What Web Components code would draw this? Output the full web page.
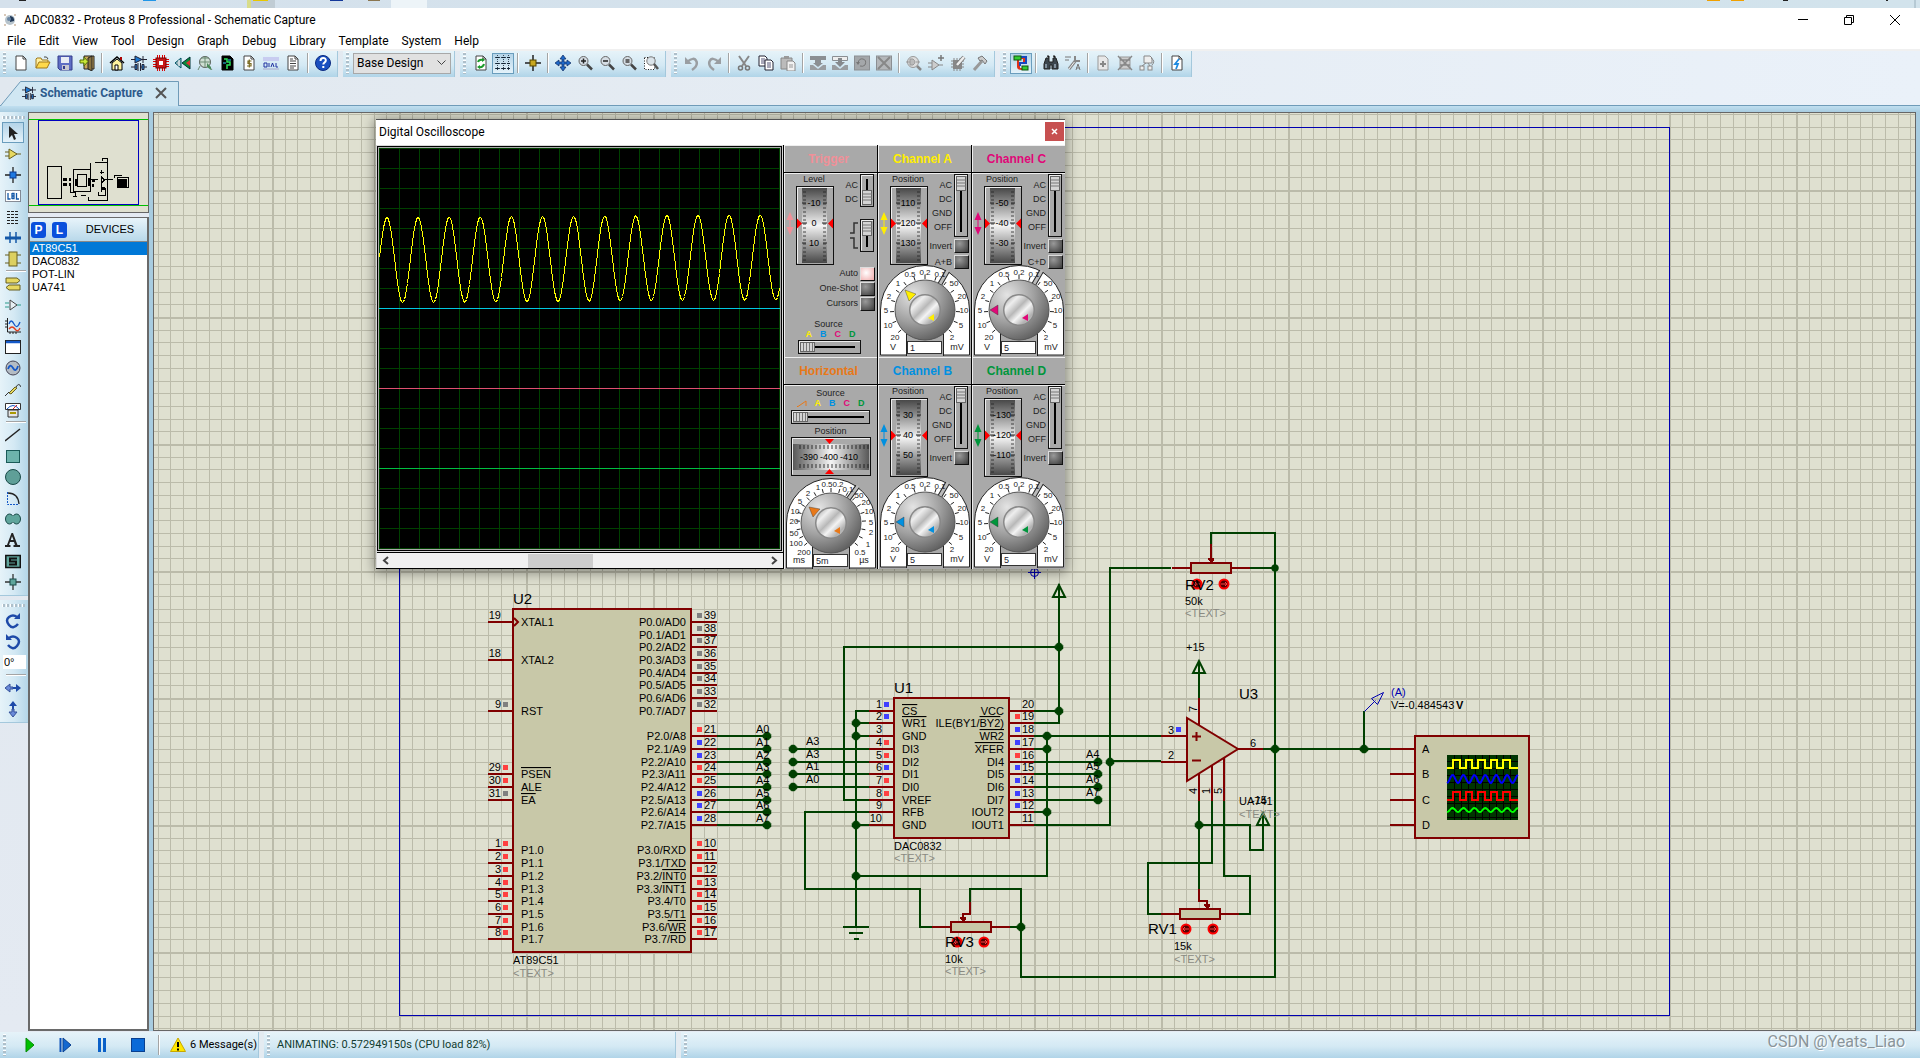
<!DOCTYPE html>
<html lang="en">
<head>
<meta charset="utf-8">
<title>ADC0832 - Proteus 8 Professional - Schematic Capture</title>
<style>
html,body{height:100%;margin:0}
body{font:12px/16px Roboto,"Liberation Sans",sans-serif;color:#000;overflow:hidden}
</style>
</head>
<body>
<proteus-app></proteus-app>
<script>
/* ---------- icons, all on a 16 x 16 field ---------- */
const mag = inner => `<circle cx="6.500" cy="6" r="4.500" fill="#d5dde4" stroke="#666"/><path d="M10 9.500l5 5" stroke="#444" stroke-width="2.500"/>${inner}`;
const page = inner => `<path d="M3 1h7l3 3v11H3z" fill="#fff" stroke="#444"/><path d="M10 1v3h3" fill="none" stroke="#444"/>${inner}`;
const gpage = inner => `<path d="M3 1h7l3 3v11H3z" fill="#e8e8e8" stroke="#999"/>${inner}`;
const ICONS = {
 new: page(''),
 open: `<path d="M1 13V4l1-1h4l1 2h6v3" fill="#fff0a0" stroke="#a07818"/><path d="M1 13l3-6h11l-3 6z" fill="#ffd94a" stroke="#a07818"/><path d="M9 2q3-1 4 2" fill="none" stroke="#444"/>`,
 save: `<path d="M1 1h14v14H3l-2-2z" fill="#5f6ec4" stroke="#343c8c"/><path d="M4 2h8v6H4z" fill="#e8ecf4"/><path d="M5 10h7v5H5z" fill="#c8c8d0"/><path d="M6 11h2v3H6z" fill="#343c8c"/>`,
 exit: `<path d="M5 1h10v13H5z" fill="#caa85c" stroke="#222"/><path d="M9 3l4-2v15l-4-2z" fill="#8a7440" stroke="#222"/><path d="M1 5h4V2l4 4.500L5 11V8H1z" fill="#c8e838" stroke="#55700a"/>`,
 home: `<path d="M1 8l7-6 7 6" fill="none" stroke="#000" stroke-width="1.500"/><path d="M3 8l5-4 5 4v7H3z" fill="#fff3a0" stroke="#000"/><path d="M6 10h3v5H6z" fill="#fff" stroke="#000"/><path d="M12 2v3" stroke="#a00" stroke-width="2"/>`,
 sch: `<path d="M0 4.500h16M12 1v7M0 12h6M10 12h6M7 8v8M9.500 8v8" stroke="#223" fill="none"/><path d="M4 1l7 3.500L4 8z" fill="#1e78d0" stroke="#223"/><path d="M4 9.500h2v5H4zM11 9.500h2v5h-2z" fill="#1e78d0" stroke="#223"/>`,
 pcb: `<path d="M4.500 0v16M6.500 0v16M9.500 0v16M11.500 0v16M0 4.500h16M0 6.500h16M0 9.500h16M0 11.500h16" stroke="#d00"/><rect x="3" y="3" width="10" height="10" fill="#c81818" stroke="#700"/><rect x="6" y="6" width="4" height="4" fill="#fff"/>`,
 view3d: `<path d="M0 8l6-5v10z" fill="#9ab4bc" stroke="#056"/><path d="M4 5v6" stroke="#fff"/><path d="M7 8l8-6v12z" fill="#0a8a3a" stroke="#033"/><path d="M11 8l4-3v6z" fill="#d33"/>`,
 gerber: `<circle cx="8" cy="7" r="5.500" fill="#cfe0d4" stroke="#555"/><path d="M2 7h12M8 1v12M4 3h8M3 11l-2 4M12 11l3 4" stroke="#6a8a72"/><path d="M10 8l4 4v3l-4-3z" fill="#4a8a5a"/>`,
 design: `<path d="M3 1h8l3 3v11H3z" fill="#000" stroke="#000"/><path d="M5 4h3v3h3v3H8v4" stroke="#2be05a" fill="none" stroke-width="1.500"/><path d="M4 8h3M9 5h3" stroke="#3cf"/>`,
 bom: page(`<path d="M10.500 6H7v2.500h3V11H6M8.300 4.500v8" fill="none" stroke="#7a6a20" stroke-width="1.200"/>`),
 vsm: `<path d="M0 2h16v4H0z" fill="#c8ccf0"/><path d="M1 8v4h3V8zM6 8v4M8 12l1.500-4 1.500 4M13 8v4h2" fill="none" stroke="#2030a0"/><path d="M0 14h16" stroke="#aac"/>`,
 notes: page(`<path d="M5 6h6M5 8.500h6M5 11h6M5 13h4M5 4h3" stroke="#444"/>`),
 help: `<circle cx="8" cy="8" r="7.500" fill="#1a4fc0" stroke="#0b2a80"/><path d="M5.500 6q0-3 2.700-3t2.600 2.500c0 2-2.500 2-2.500 4" fill="none" stroke="#fff" stroke-width="2"/><rect x="7.300" y="11" width="2" height="2" fill="#fff"/>`,
 refresh: page(`<path d="M5 7q1-3 5-2M11 9q-1 4-5 3" fill="none" stroke="#1a9a2a" stroke-width="2"/><path d="M9 3l3 2-3 2zM7 10l-3 2 3 2z" fill="#1a9a2a"/>`),
 grid: `<path d="M2.500 0v16M8.500 0v16M13.500 0v16M0 2.500h16M0 8.500h16M0 13.500h16" stroke="#345" stroke-dasharray="1 1"/><path d="M1 2.500h3M7 2.500h3M12 2.500h3M1 8.500h3M7 8.500h3M12 8.500h3M1 13.500h3M7 13.500h3M12 13.500h3" stroke="#123"/>`,
 origin: `<path d="M8 0v16M0 8h16" stroke="#222" stroke-width="1.500"/><rect x="5" y="5" width="6" height="6" fill="#c8a820" stroke="#554400"/>`,
 pan: `<path d="M8 0l3 4H9v3h3V5l4 3-4 3V9H9v3h2l-3 4-3-4h2V9H4v2L0 8l4-3v2h3V4H5z" fill="#1e68c8" stroke="#0b2a60" stroke-width=".7"/>`,
 zin: mag('<path d="M4 6h5M6.500 3.500v5" stroke="#222" stroke-width="1.500"/>'),
 zout: mag('<path d="M4 6h5" stroke="#222" stroke-width="1.500"/>'),
 zall: mag('<rect x="4.500" y="4" width="4" height="4" fill="#666"/>'),
 zarea: `<path d="M1.500 2.500h10v12h-10z" fill="#fff" stroke="#222" stroke-dasharray="1 1.500"/><circle cx="8" cy="6" r="4.200" fill="#dbe4ea" stroke="#777"/><path d="M11 9l4 5" stroke="#555" stroke-width="2.500"/>`,
 undo: `<path d="M3 7q7-6 9.500-.5Q14 11 8 15" fill="none" stroke="#9a9ea2" stroke-width="2.500"/><path d="M1 2v7h7z" fill="#9a9ea2"/>`,
 redo: `<path d="M13 7Q6 1 3.500 6.500 2 11 8 15" fill="none" stroke="#9a9ea2" stroke-width="2.500"/><path d="M15 2v7H8z" fill="#9a9ea2"/>`,
 cut: `<path d="M3 1l7 10M13 1L6 11" stroke="#888" stroke-width="2"/><circle cx="4.500" cy="13" r="2" fill="none" stroke="#777" stroke-width="1.500"/><circle cx="11.500" cy="13" r="2" fill="none" stroke="#777" stroke-width="1.500"/>`,
 copy: `<path d="M1 1h6l2 2v8H1z" fill="#fff" stroke="#223"/><path d="M3 4h4M3 6h4M3 8h4" stroke="#557"/><path d="M7 5h6l2 2v8H7z" fill="#fff" stroke="#223"/><path d="M9 8h4M9 10h4M9 12h4" stroke="#557"/>`,
 paste: `<path d="M1 3h11v11H1z" fill="#bbb" stroke="#888"/><rect x="4" y="1" width="5" height="3" fill="#999"/><path d="M7 6h6l2 2v8H7z" fill="#f2f2f2" stroke="#888"/><path d="M9 10h4M9 12h4" stroke="#999"/>`,
 bcopy: `<path d="M0 1h16v4h-5v3h2l-5 4-5-4h2V5H0z" fill="#8b8f93"/><path d="M0 10h3l5 4 5-4h3v5H0z" fill="#999da1"/>`,
 bmove: `<path d="M.5 1.500h15v4H.5z" fill="#eee" stroke="#8b8f93"/><path d="M6 3h4v4h3l-5 5-5-5h3z" fill="#85898d"/><path d="M0 10h3l5 4 5-4h3v5H0z" fill="#999da1"/>`,
 brot: `<rect x=".5" y="1" width="15" height="14" fill="#a4a7aa" stroke="#8b8f93"/><path d="M4 8q1-5 5-4t2 6q-2 2-5 1" fill="none" stroke="#777"/><path d="M2 7h4l-2 3z" fill="#777"/>`,
 bdel: `<rect x=".5" y="1" width="15" height="14" fill="#b4b7ba" stroke="#8b8f93"/><path d="M2 2l12 12M14 2L2 14" stroke="#888" stroke-width="2"/>`,
 pick: `<circle cx="7" cy="7" r="5.500" fill="#ddd" stroke="#999"/><path d="M4 4h3q4 3 0 6H4zM0 7h4M10 7h4" fill="#bbb" stroke="#999"/><path d="M11 11l4 4" stroke="#888" stroke-width="2.500"/>`,
 make: `<path d="M4 5l7 5-7 5zM0 8h4M0 12h4M11 10h4" fill="#ccc" stroke="#888"/><path d="M13 0v6M10 3h6" stroke="#777" stroke-width="1.500"/>`,
 pack: `<path d="M4 3v13M7 3v13M10 3v13M1 6h13M1 9h13M1 12h13" stroke="#888"/><rect x="3" y="5" width="9" height="9" fill="#888"/><path d="M7 10l7-8" stroke="#777" stroke-width="4"/><path d="M7 10l7-8" stroke="#eee" stroke-width="2.500"/>`,
 decomp: `<path d="M2 15l8-9" stroke="#999" stroke-width="3"/><path d="M6 3l4-2 5 5-2 3-3-4-2 1z" fill="#ccc" stroke="#777"/>`,
 wire: `<path d="M5 4v8q0 2 4 2M8 3h3v5H6v5" fill="none" stroke="#e0301a" stroke-width="2"/><path d="M8 2h5v6H7v3" fill="none" stroke="#1848c0" stroke-width="2"/><rect x="1" y="1" width="7" height="4" fill="#3c3" stroke="#151"/><rect x="9" y="11" width="6" height="4" fill="#3c3" stroke="#151"/>`,
 find: `<path d="M3 3h3v4h4V3h3l2 6v5H9v-4H7v4H1V9z" fill="#3c464e" stroke="#222"/><path d="M3 9v4M12 9v4" stroke="#9ab" stroke-width="1.500"/><path d="M4 1h2v2M10 1h2v2" stroke="#222"/>`,
 prop: `<path d="M0 2h6M0 5h4" stroke="#777"/><path d="M4 14l7-9" stroke="#888" stroke-width="3"/><path d="M4 14l7-9" stroke="#eee"/><path d="M10 1v5h5" fill="none" stroke="#888" stroke-width="2"/><path d="M11 15l2-6 2 6M11 13h4" fill="none" stroke="#777"/>`,
 addp: gpage('<path d="M8 6v6M5 9h6" stroke="#888" stroke-width="2"/>'),
 delp: `<path d="M3 2h10v12H3z" fill="#ccc" stroke="#999"/><path d="M1 1l14 14M15 1L1 15M3 5h10M3 10h10" stroke="#888" stroke-width="1.500"/>`,
 parent: `<path d="M5 1h6l2 2v5H5z" fill="#eee" stroke="#888"/><rect x="1" y="11" width="4" height="4" fill="#eee" stroke="#888"/><rect x="9" y="11" width="4" height="4" fill="#eee" stroke="#888"/><path d="M7 8l-4 3M9 8l2 3M12 3q5 3 1 7" fill="none" stroke="#888"/>`,
 erc: page(`<path d="M10 4L6 9h3l-2 5" fill="none" stroke="#1e8ae0" stroke-width="1.800"/>`),
 select: `<path d="M4 1v12l3-3 2 5 2-1-2-5h4z" fill="#222"/>`,
 comp: `<path d="M0 6h5M0 10h5M11 8h5" stroke="#665f20"/><path d="M4 3l8 5-8 5z" fill="#e6d860" stroke="#665f20"/>`,
 junction: `<path d="M8 0v16M0 8h16" stroke="#222" stroke-width="1.300"/><rect x="5" y="5" width="6" height="6" fill="#1e78e0" stroke="#0b3a90"/>`,
 label: `<rect x=".5" y="2.500" width="15" height="11" fill="#fff" stroke="#223" stroke-dasharray="1 1"/><path d="M3 5v6h2.500M7 5v6M7 5.500h2v5H7M7 8h2M11.500 5v6H14" fill="none" stroke="#1458a8" stroke-width="1.300"/>`,
 script: `<path d="M2 2.500h12M2 5.500h12M2 8.500h12M2 11.500h12M2 14.500h12" stroke="#222" stroke-dasharray="3 1"/>`,
 bus: `<path d="M0 8h16" stroke="#1458a8" stroke-width="3"/><path d="M5 2v11M11 2v11" stroke="#1458a8" stroke-width="1.500"/>`,
 sub: `<path d="M0 4h16M0 12h16" stroke="#665f20"/><rect x="4" y="1" width="8" height="14" fill="#dcd060" stroke="#665f20"/>`,
 term: `<path d="M1 2h11l3 2.500L12 7H1zM4 9h11v5H4l-3-2.500z" fill="#e6d860" stroke="#665f20"/>`,
 pin: `<path d="M5 3l7 5-7 5z" fill="#e8f0f4" stroke="#444"/><path d="M0 6h4M0 10h4M12 8h4" stroke="#2a9a8a"/>`,
 graph: `<path d="M2.500 0v14H16M0 3h2M0 6h2M0 9h2M5 16v-2M8 16v-2M11 16v-2" fill="none" stroke="#222"/><path d="M4 6q2-6 5 0t6-2" fill="none" stroke="#1458c8" stroke-width="1.300"/><path d="M4 11q3-4 6 0t5-1" fill="none" stroke="#e03a1a" stroke-width="1.300"/>`,
 tape: `<rect x=".5" y="1.500" width="15" height="13" fill="#fff" stroke="#222"/><path d="M1 3h14" stroke="#1458c8" stroke-width="2.500"/>`,
 gen: `<circle cx="8" cy="8" r="7" fill="#b4bcc4" stroke="#445"/><path d="M3 9q2-6 5-1t5-2" fill="none" stroke="#1458c8" stroke-width="1.800"/>`,
 probe: `<path d="M0 15l4-4" stroke="#333"/><path d="M4 12l6-6 2 1-6 6z" fill="#e6d860" stroke="#665f20"/><path d="M11 6q3-5 5 0" fill="none" stroke="#333"/>`,
 instr: `<path d="M.5 1.500h15v6H.500z" fill="#fff" stroke="#333"/><path d="M2 7q6-7 12 0" fill="none" stroke="#1458c8"/><path d="M8 7l4-4" stroke="#d22"/><path d="M3 8h10v7H3z" fill="#e4e4e4" stroke="#333"/><path d="M5 11h6" stroke="#a90" stroke-width="2"/>`,
 line: `<path d="M0 14L15 2" stroke="#222" stroke-width="1.500"/>`,
 box: `<rect x="1.500" y="2.500" width="13" height="12" fill="#6db3ac" stroke="#1a5a58"/>`,
 circle: `<circle cx="8" cy="8" r="7.500" fill="#5f9f98" stroke="#1a4a48"/>`,
 arc: `<path d="M2.500 2v12.500H14" fill="none" stroke="#1458c8" stroke-dasharray="2 1"/><path d="M3 3q10 0 11 11" fill="none" stroke="#222" stroke-width="1.300"/>`,
 path: `<ellipse cx="4.500" cy="8" rx="4" ry="5" fill="#5fa59c" stroke="#1a4a48"/><ellipse cx="11.500" cy="8" rx="4" ry="5" fill="#5fa59c" stroke="#1a4a48"/><rect x="6" y="5" width="4" height="6" fill="#5fa59c"/>`,
 text: `<path d="M8 1l4.500 12H15v2H8.500v-2H10l-1-3H5l-1 3h1.500v2H0v-2h2L6.500 1zM5.800 8h2.700L7 4.200z" fill="#222"/>`,
 symbol: `<rect x=".8" y="2.500" width="14.500" height="12" fill="#5fa59c" stroke="#111" stroke-width="1.500"/><path d="M12 5.500H5v3h6v3H4" fill="none" stroke="#111" stroke-width="2"/>`,
 marker: `<path d="M8 0v16M0 8h16" stroke="#333" stroke-width="1.300"/><rect x="5" y="5" width="6" height="6" fill="#5fa59c" stroke="#1a4a48"/>`,
 cw: `<path d="M12 4Q8 1 4 4t0 8 9-1" fill="none" stroke="#1e4aa8" stroke-width="2.500"/><path d="M9 6h6V0z" fill="#1e4aa8"/>`,
 ccw: `<path d="M4 4q4-3 8 0t0 8-9-1" fill="none" stroke="#1e4aa8" stroke-width="2.500"/><path d="M7 6H1V0z" fill="#1e4aa8"/>`,
 hflip: `<path d="M0 8l5-4v3h3v2H5v3z" fill="#6a8ad8" stroke="#35509a"/><path d="M16 8l-5-4v3H8v2h3v3z" fill="#1e4aa8"/>`,
 vflip: `<path d="M8 0l4 5H9v3H7V5H4z" fill="#1e4aa8"/><path d="M8 16l4-5H9V8H7v3H4z" fill="#6a8ad8" stroke="#35509a"/>`,
 play: `<path d="M4 1l8 7-8 7z" fill="#00c000" stroke="#078a07"/>`,
 step: `<path d="M2.500 1v14" stroke="#0a50b8" stroke-width="2"/><path d="M5 1l8 7-8 7z" fill="#1468d0" stroke="#0a4090"/>`,
 pause: `<path d="M4 1h3v14H4zM9 1h3v14H9z" fill="#0a60c8"/>`,
 stop: `<rect x="1.500" y="1.500" width="13" height="13" fill="#0a6ad8" stroke="#0a4090"/>`,
 warn: `<path d="M8 1l7.500 13.500H.5z" fill="#ffe600" stroke="#c8a800"/><path d="M8 5v5" stroke="#000" stroke-width="2"/><rect x="7" y="11.500" width="2" height="2"/>`
};
const svgIcon = n => `<svg width="16" height="16" viewBox="0 0 16 16" aria-hidden="true">${ICONS[n]}</svg>`;
const define = (name, html) => customElements.define(name, class extends HTMLElement {
  constructor(){ super(); this.attachShadow({mode:'open'}); }
  connectedCallback(){ this.shadowRoot.innerHTML = typeof html === 'function' ? html(this) : html; }
});

define('icon-button', el => `<style>
:host{display:block}
button{display:grid;place-items:center;width:22px;height:21px;margin:0;padding:0;border:1px solid transparent;background:none}
:host([pressed]) button{border-color:#6a9dbd;background:linear-gradient(#b4d4e8,#e4f2fa)}
svg{display:block}
</style><button aria-label="${el.getAttribute('name')}">${svgIcon(el.getAttribute('name'))}</button>`);

define('bar-separator', `<style>
:host{display:block;flex:none;width:2px;height:20px;margin:0 3px;background:linear-gradient(90deg,#a4a4a4 50%,#fff 50%)}
:host([across]){width:20px;height:2px;margin:1px 4px;background:linear-gradient(#a4a4a4 50%,#fff 50%)}
</style>`);

define('tool-group', `<style>
:host{display:flex;align-items:center;box-sizing:border-box;height:26px;padding:0 3px 2px 0;border-right:1px solid #a4c8dc;
background:linear-gradient(#e6f3f9,#d4e9f4 55%,#b0d4e8)}
i{flex:none;width:3px;height:22px;margin:0 4px 0 3px;background:repeating-linear-gradient(#fff 0 1px,#aebfca 1px 3px,transparent 3px 4px)}
</style><i></i><slot></slot>`);

define('desktop-strip', `<style>
:host{display:block;height:8px;background:linear-gradient(90deg,#d5e1ec,#d2e3ec)}
svg{display:block}
</style><svg width="100%" height="8"><path d="M391 0h36v8h-36z" fill="#edf4f8"/><path d="M247 0h4v8h-4z" fill="#d8dc8a"/><path d="M251 0h24v8h-24z" fill="#c0ccd4"/>
<path d="M253 0h15v1h-15z" fill="#e8c800"/><path d="M19 0h7v1h-7z" fill="#222"/><path d="M143 0h13v1h-13z" fill="#2196e8"/><path d="M330 0h13v1h-13z" fill="#14389a"/><path d="M368 0h12v1h-12z" fill="#8a7650"/>
<path d="M1707 0h13v1h-13zM1731 0h13v1h-13z" fill="#f0a000"/><path d="M1783 0h5v1h-5zM1886 0h2v1h-2z" fill="#222"/><path d="M1915 0v8" stroke="#9ab0bc"/></svg>`);

define('title-bar', `<style>
:host{display:flex;align-items:center;height:24px;padding-left:4px;background:#fff;gap:8px}
h1{flex:1;margin:0;font:inherit;white-space:nowrap}
svg{display:block}
.win{display:flex;padding-right:2px}
.win button{width:46px;height:22px;padding:0;border:0;background:none;display:grid;place-items:center}
</style>
<svg width="12" height="12" viewBox="0 0 12 12"><path d="M0 0h2v2H0zM10 0h2v2h-2zM0 10h2v2H0zM10 10h2v2h-2z" fill="#d8c8b8"/><circle cx="6" cy="6" r="5" fill="#b8c4cc"/><path d="M6 2a4 4 0 0 1 4 5L6 8z" fill="#223a58"/><circle cx="5" cy="5" r="2" fill="#6a86a4"/></svg>
<h1>ADC0832 - Proteus 8 Professional - Schematic Capture</h1>
<div class="win">
<button aria-label="minimize"><svg width="10" height="10"><path d="M0 4.500h10" stroke="#000"/></svg></button>
<button aria-label="restore"><svg width="10" height="10"><path d="M.5 2.500h7v7h-7zM2.500 2.500v-2h7v7h-2" fill="none" stroke="#000"/></svg></button>
<button aria-label="close"><svg width="10" height="10"><path d="M0 0l10 10M10 0L0 10" stroke="#000"/></svg></button></div>`);

define('menu-bar', `<style>
:host{display:block;height:17px;background:#fff;border-bottom:2px solid #f0f0f0}
nav{display:flex;padding-top:1px}
button{font:inherit;line-height:16px;border:0;background:none;padding:0 6px 0 7px;margin:0;color:#000}
</style><nav>${['File','Edit','View','Tool','Design','Graph','Debug','Library','Template','System','Help'].map(t=>`<button>${t}</button>`).join('')}</nav>`);

const B = (s, pressed='') => s.split(' ').map(n => n==='|' ? '<bar-separator></bar-separator>' : `<icon-button name="${n}"${n===pressed?' pressed':''}></icon-button>`).join('');
define('main-toolbar', `<style>
:host{display:flex;gap:5px;height:30px;background:linear-gradient(90deg,#e1e8ef,#eaf1f9)}
.pick{display:grid;align-items:center}
.pick>*{grid-area:1/1}
select{appearance:none;width:98px;height:21px;margin:0;border:1px solid #a8a8a8;border-radius:0;background:#e1e1e1;font:inherit;line-height:16px;padding:0 3px;color:#000}
.pick svg{justify-self:end;margin-right:5px;pointer-events:none}
</style>
<tool-group>${B('new open save exit | home sch pcb view3d gerber design bom vsm notes | help')}</tool-group>
<tool-group><div class="pick"><select aria-label="Design variant"><option>Base Design</option></select><svg width="9" height="6"><path d="M.5.5l4 4 4-4" fill="none" stroke="#444"/></svg></div></tool-group>
<tool-group>${B('refresh grid | origin | pan zin zout zall zarea','grid')}</tool-group>
<tool-group>${B('undo redo | cut copy paste | bcopy bmove brot bdel | pick make pack decomp')}</tool-group>
<tool-group>${B('wire | find prop | addp delp parent | erc','wire')}</tool-group>`);

define('tab-strip', `<style>
:host{display:block;background:linear-gradient(90deg,#e1e8ef,#eaf1f9)}
.row{display:flex;height:24px}
.tab{display:flex;align-items:center;gap:4px;box-sizing:border-box;width:179px;height:25px;padding:0 0 2px 22px;margin-bottom:-1px;color:#2c5a8c;font-weight:700;position:relative}
.tab>*{position:relative}
.tab .bg{position:absolute;inset:0}
svg{display:block;flex:none}
span{white-space:nowrap}
button{border:0;padding:0;margin-left:8px;background:none}
.band{height:6px;border-top:1px solid #6f9bb8;background:linear-gradient(#c0dff0,#a8cce0)}
</style><div class="row"><div class="tab"><svg class="bg" width="179" height="25"><path d="M0 25.500L20.500.5h158v25z" fill="#d0e7f3" stroke="#6f9bb8"/></svg><svg width="14" height="16" viewBox="0 0 16 16">${ICONS.sch}</svg><span>Schematic Capture</span><button aria-label="close tab"><svg width="12" height="12"><path d="M1 1l10 10M11 1L1 11" stroke="#555" stroke-width="2"/></svg></button></div></div><div class="band"></div>`);

define('mode-bar', `<style>
:host{display:block;flex:none;width:28px;background:linear-gradient(#e0e7ee,#e4eaf2)}
section{box-sizing:border-box;padding:0 0 3px 2px;border-bottom:1px solid #a4c8dc;background:linear-gradient(90deg,#e6f3f9,#d4e9f4 50%,#b4d6e8)}
section+section{margin-top:4px}
i{display:block;height:3px;margin:0 2px 0 0;border:solid transparent;border-width:4px 0 3px;background:repeating-linear-gradient(90deg,#fff 0 1px,#aebfca 1px 3px,transparent 3px 4px);background-clip:padding-box}
input{display:block;box-sizing:border-box;width:23px;height:14px;margin:3px 0 5px 1px;padding:0 1px;border:0;font:11px/14px "Liberation Sans",sans-serif;background:#fff}
</style>
<section><i></i>${B('select comp junction label script bus sub','select')}<bar-separator across></bar-separator>${B('term pin graph tape gen probe instr')}<bar-separator across></bar-separator>${B('line box circle arc path text symbol marker')}</section>
<section><i></i>${B('cw ccw')}<input aria-label="Rotation" value="0°"><bar-separator across></bar-separator>${B('hflip vflip')}</section>`);

define('device-panel', `<style>
:host{display:flex;flex-direction:column;flex:none;box-sizing:border-box;width:121px;gap:4px;font:11px/13px "Liberation Sans",Arial,sans-serif}
.preview{box-sizing:border-box;height:101px;border:1px solid #666;background:#dfe0d0}
svg{display:block}
.list{flex:1;box-sizing:border-box;border:2px solid #6a6a6a;border-top-width:1px;background:#fff}
header{display:flex;align-items:center;gap:6px;height:23px;padding-left:1px;background:linear-gradient(#e8f4fa,#b8d8ea);border-bottom:1px solid #888}
header button{width:15px;height:16px;padding:0;border:0;border-radius:3px;background:#0a50dc;color:#fff;font:bold 12px/16px "Liberation Sans",sans-serif}
header span{flex:1;text-align:center}
ul{list-style:none;margin:0;padding:0}
li{padding-left:2px}
li.on{background:#0078d7;color:#fff}
</style>
<div class="preview"><svg width="119" height="99" viewBox="29 113 119 99" shape-rendering="crispEdges">
<path d="M29 119.500h119M29 205.500h119" stroke="#00c000"/><rect x="38.500" y="120.500" width="100" height="84" fill="none" stroke="#0000c0"/>
<g fill="none" stroke="#000"><rect x="47.500" y="166.500" width="14" height="32"/><path d="M73.500 169.500h17v22h-17zM90.500 163v20M70.500 184v8h5v5M94.500 162.500h13v38h-19v-4M102.500 161v-2.500h5v3M81 195.500h5M104 179.500h9M114.500 178v-3h7M90 179.500h8"/><rect x="77.500" y="174.500" width="9" height="12"/><path d="M101.500 177v6l3-3zM101.500 170v4M100 172.500h4M98 192v3h7v-7M101.500 184v8M73 196.500h4"/></g>
<path d="M63 178h4v3h-4zM63 183h4v3h-4zM69 178h2v3h-2zM69 183h2v3h-2zM88 178h3v8h-3zM92 179h3v3h-3zM92 184h2v3h-2zM118 179h9v8h-9zM101 187h4v3h-4zM75 179h2v7h-2z"/><path d="M117.500 177.500h11v10h-11z" fill="none" stroke="#000"/></svg></div>
<div class="list"><header><button>P</button><button>L</button><span>DEVICES</span></header>
<ul><li class="on">AT89C51</li><li>DAC0832</li><li>POT-LIN</li><li>UA741</li></ul></div>`);

/* ---------- schematic: everything sits on a 12.7 px snap grid ---------- */
const X = j => Math.round(399 + 12.7*j), Y = k => Math.round(571 + 12.7*k);
const RED='#800000', GREEN='#004000', BODY='#c8c8a8';
const wire = (...p) => { let d='';for(let i=0;i<p.length;i+=2)d+=(i?'L':'M')+X(p[i])+' '+Y(p[i+1]);return `<path d="${d}"/>`; };
const poly = d => `<path d="${d}"/>`;
const dot = (j,k) => `<path d="M${X(j)-1.5} ${Y(k)-4}h3l2.500 2.500v3l-2.500 2.500h-3l-2.500-2.500v-3z"/>`;
const txt = (x,y,s,a='') => `<text x="${x}" y="${y}" ${a}>${s}</text>`;
const over = s => `<tspan text-decoration="overline">${s}</tspan>`;
const SQ = {r:'#ff4040',b:'#4040ff',g:'#808080'};
const sq = (x,y,c) => c&&SQ[c] ? `<rect x="${x}" y="${y}" width="5" height="5" fill="${SQ[c]}"/>` : '';
const END='text-anchor="end"';
function gridLines(){ let s='',b='';
  for(let j=-20;j<=260;j++){const p=`M${X(j)+.5} 113V2400`; j%10?s+=p:b+=p;}
  for(let k=-36;k<=140;k++){const p=`M154 ${Y(k)+.5}H3900`; k%10?s+=p:b+=p;}
  return `<path d="${s}" stroke="#bbbbaa"/><path d="${b}" stroke="#bbbbaa" stroke-width="2"/>`; }
function pinsL(j,list){ let l='',t='';
  list.forEach(([k,n,name,c])=>{ l+=wire(j-2,k,j,k); t+=sq(X(j)-10,Y(k)-9,c)+txt(X(j)-12,Y(k)-3,n,END)+txt(X(j)+8,Y(k)+4,name); });
  return [l,t]; }
function pinsR(j,list){ let l='',t='';
  list.forEach(([k,n,name,c])=>{ l+=wire(j,k,j+2,k); t+=sq(X(j)+6,Y(k)-9,c)+txt(X(j)+13,Y(k)-3,n)+txt(X(j)-5,Y(k)+4,name,END); });
  return [l,t]; }
function pot(x,y,wx){ return `<rect x="${x}" y="${y-5}" width="40" height="10" fill="${BODY}"/><path d="M${x-19} ${y}h19M${x+40} ${y}h19"/><path d="M${wx-3} ${y-10}h6v2l-3 3-3-3z" fill="${RED}" stroke="none"/>`; }
const knobs = (x,y) => [x,x+27].map((c,i)=>`<circle cx="${c}" cy="${y}" r="4.500" fill="#500" stroke="#f00" stroke-width="2"/><path d="M${c-3} ${y}h6M${c+(i?1:-1)} ${y-2}l${i?2:-2} 2 ${i?-2:2} 2" stroke="#f44" fill="none"/>`).join('');
const arrowUp = (x,y) => `<path d="M${x} ${y+1}l-6 12h12z" fill="none"/>`;
function schematic(){
 const P='0 1 2 3 4 5 6 7'.split(' ');
 const [l1,t1]=pinsL(9,[[4,19,'XTAL1'],[7,18,'XTAL2'],[11,9,'RST','g'],[16,29,over('PSEN'),'r'],[17,30,'ALE','r'],[18,31,over('EA'),'g'],...P.map(i=>[22+ +i,+i+1,'P1.'+i,'r'])]);
 const p3=['RXD','TXD',over('INT0'),over('INT1'),'T0','T1',over('WR'),over('RD')];
 const [l2,t2]=pinsR(23,[...P.map(i=>[4+ +i,39-i,`P0.${i}/AD${i}`,'g']),...P.map(i=>[13+ +i,21+ +i,`P2.${i}/A${8+ +i}`,'rbbrrbbb'[i]]),...P.map(i=>[22+ +i,10+ +i,`P3.${i}/${p3[i]}`,'r'])]);
 const [l3,t3]=pinsL(39,[over('CS'),over('WR1'),'GND','DI3','DI2','DI1','DI0','VREF','RFB','GND'].map((n,i)=>[11+i,i+1,n,'bb-rrbrr--'[i]]));
 const [l4,t4]=pinsR(48,['VCC',`ILE(BY1/${over('BY2')})`,over('WR2'),over('XFER'),'DI4','DI5','DI6','DI7','IOUT2','IOUT1'].map((n,i)=>[11+i,20-i,n,'-rbbrbbbb-'[i]]));
 const big='font-size="15"', gray='fill="#8a8a82"';
 let sqw=y=>`M1447 ${y}h6v-8h7v8h6v-8h6v8h6v-8h7v8h6v-8h6v8h6v-8h7v8h8`;
 let zig=(y,a,n)=>{let d='';for(let i=0;i<=71;i++)d+=(i?'L':'M')+(1447+i)+' '+(y-a*Math.cos(i/71*n*2*Math.PI+3.1)).toFixed(1);return d;};
 return `<svg aria-label="schematic"><g transform="translate(-154 -113)">
 <g shape-rendering="crispEdges" fill="none">${gridLines()}<rect x="399.500" y="127.500" width="1270" height="888" stroke="#0000b0"/></g>
 <g shape-rendering="crispEdges" stroke="${RED}" stroke-width="2" fill="none">
  <rect x="${X(9)}" y="${Y(3)}" width="${X(23)-X(9)}" height="${Y(30)-Y(3)}" fill="${BODY}"/>
  <rect x="${X(39)}" y="${Y(10)}" width="${X(48)-X(39)}" height="${Y(21)-Y(10)}" fill="${BODY}"/>
  <rect x="${X(80)}" y="${Y(13)}" width="114" height="102" fill="${BODY}"/>
  ${l1}${l2}${l3}${l4}${[14,16,18,20].map(k=>wire(78,k,80,k)).join('')}
  ${wire(60,13,62,13)}${wire(60,15,62,15)}${poly('M1238 749h25M1199 698v27M1199 774v27M1212 766v35M1224 758v43M1199 889v12h8v6M970 902v12h-7v4M1211 544v16')}
  ${pot(951,927,963)}${pot(1191,568,1211)}${pot(1180,914,1207)}
 </g>
 <path d="M514 618l4 4-4 4" fill="none" stroke="${RED}" stroke-width="2"/>
 <path d="M1187 718v63l51-32z" fill="${BODY}" stroke="${RED}" stroke-width="2"/>
 <path d="M1192 736.500h9M1196.500 732v9M1192 760.500h9" stroke="${RED}" stroke-width="2"/>
 <g shape-rendering="crispEdges" stroke="${GREEN}" stroke-width="2" fill="none">
  ${[13,14,15,16,17,18,19,20].map(k=>wire(25,k,29,k)).join('')}${[14,15,16,17].map(k=>wire(31,k,37,k)).join('')}${[15,16,17,18].map(k=>wire(50,k,55,k)).join('')}
  ${wire(37,11,36,11,36,28)}${wire(36,12,37,12)}${wire(36,13,37,13)}${wire(36,20,37,20)}
  ${wire(37,18,35,18,35,6,52,6)}${wire(50,11,52,11)}${wire(50,12,52,12,52,1)}
  ${wire(50,13,60,13)}${wire(51,13,51,24,36,24)}${wire(50,14,51,14)}${wire(50,19,51,19)}
  ${wire(37,19,32,19,32,25,41,25,41,28,42,28)}
  ${poly('M970 902V889H1021V977H1275V533H1211V544M1010 927h11M1250 568h25M1171 568H1110V825H1034M1110 761H1161M1199 661V698M1199 801V889M1212 801V863H1148V914H1161M1224 801V876H1250V914H1239M1199 825H1250V850H1263V813')}
  ${wire(68,14,78,14)}${wire(76,14,76,11)}
  <path d="M843 927h26M849 933h14M854 939h5"/>
 </g>
 <g stroke="${GREEN}" stroke-width="2">${arrowUp(X(52),584)}${arrowUp(1199,660)}${arrowUp(1263,812)}</g>
 <g fill="${GREEN}" stroke="${GREEN}" stroke-width=".5">${[13,14,15,16,17,18,19,20].map(k=>dot(29,k)).join('')}${[14,15,16,17].map(k=>dot(31,k)).join('')}${[15,16,17,18].map(k=>dot(55,k)).join('')}
  ${[[36,12],[36,13],[36,20],[36,24],[52,6],[52,11],[51,13],[51,14],[51,19],[56,15],[49,28],[69,14],[76,14],[63,20]].map(a=>dot(...a)).join('')}<circle cx="1275" cy="568" r="3.500"/></g>
 <g fill="none" stroke="#0000b0"><path d="M1364.500 711.500l11-11M1383.500 692.500l-12 6 6 6z"/><circle cx="1034.500" cy="572.500" r="4"/><path d="M1028 572.500h13M1034.500 566v13"/></g>
 ${knobs(957,942)}${knobs(1197,584)}${knobs(1186,929)}
 <g shape-rendering="crispEdges"><rect x="1447" y="755" width="71" height="65" fill="#003400"/><path d="${Array.from({length:9},(_,i)=>`M${1454.5+i*7} 755v65`).join('')}${Array.from({length:9},(_,i)=>`M1447 ${761.5+i*7}h71`).join('')}" stroke="#000"/></g>
 <g fill="none" stroke-width="2"><path d="${sqw(768)}" stroke="#ff0"/><path d="${zig(779,4,6.5)}" stroke="#00f"/><path d="${sqw(800)}" stroke="#f00"/><path d="${zig(810,2,6.5)}" stroke="#0f0"/></g>
 <g font-family="Liberation Sans,Arial,sans-serif" font-size="11" fill="#000">${t1}${t2}${t3}${t4}
  ${[0,1,2,3,4,5,6,7].map(i=>txt(756,Y(13+i)-3,'A'+i)).join('')}${['A3','A3','A1','A0'].map((s,i)=>txt(806,Y(14+i)-4,s)).join('')}${['A4','A5','A6','A7'].map((s,i)=>txt(1086,Y(15+i)-4,s)).join('')}
  ${txt(513,604,'U2',big)}${txt(894,693,'U1',big)}${txt(1239,699,'U3',big)}${txt(1185,590,'RV2',big)}${txt(945,947,'RV3',big)}${txt(1148,934,'RV1',big)}
  ${txt(513,964,'AT89C51')}${txt(894,850,'DAC0832')}${txt(1185,605,'50k')}${txt(945,963,'10k')}${txt(1174,950,'15k')}${txt(1186,651,'+15')}
  <g ${gray}>${txt(513,977,'&lt;TEXT&gt;')}${txt(894,862,'&lt;TEXT&gt;')}${txt(1185,617,'&lt;TEXT&gt;')}${txt(945,975,'&lt;TEXT&gt;')}${txt(1174,963,'&lt;TEXT&gt;')}${txt(1239,818,'&lt;TEXT&gt;')}</g>
  ${txt(1239,805,'UA741')}${txt(1251,804,'-15')}
  ${txt(1174,734,'3',END)}${sq(1176,727,'b')}${txt(1174,759,'2',END)}${txt(1250,747,'6')}
  ${[[1197,712,7],[1197,794,4],[1210,794,1],[1222,794,5]].map(([x,y,n])=>txt(0,0,n,`transform="translate(${x} ${y}) rotate(-90)"`)).join('')}
  ${txt(1391,696,'(A)','fill="#0000b0"')}${txt(1391,709,'V=-0.484543')}${txt(1456,709,'V','font-weight="bold"')}
  ${['A','B','C','D'].map((s,i)=>txt(1422,Y(14+2*i)+4,s)).join('')}
 </g></g></svg>`;
}

define('schematic-canvas', () => `<style>
:host{display:block;position:relative;flex:1;min-width:0;overflow:hidden;border:1px solid #666;background:#dfe0d0}
svg{position:absolute;inset:0;width:100%;height:100%}
::slotted(*){position:absolute;left:222px;top:6px}
</style>${schematic()}<slot></slot>`);

/* ---------- oscilloscope ---------- */
const COL={A:'#ffee00',B:'#0090e0',C:'#e00878',D:'#00963c',T:'#f09098',H:'#e87818'};
const SF='font-family="Liberation Sans,Arial,sans-serif"';
const GRADS=`<defs><linearGradient id="w" x2="0" y2="1"><stop stop-color="#484848"/><stop offset=".5" stop-color="#f4f4f4"/><stop offset="1" stop-color="#484848"/></linearGradient>
<linearGradient id="wh"><stop stop-color="#585858"/><stop offset=".5" stop-color="#f4f4f4"/><stop offset="1" stop-color="#585858"/></linearGradient>
<radialGradient id="k" cx=".3" cy=".25" r=".9"><stop stop-color="#e4e4e4"/><stop offset=".5" stop-color="#a0a0a0"/><stop offset="1" stop-color="#505050"/></radialGradient>
<linearGradient id="m" x2="1" y2="1"><stop stop-color="#999"/><stop offset=".25" stop-color="#eee"/><stop offset=".45" stop-color="#b8b8b8"/><stop offset=".6" stop-color="#f4f4f4"/><stop offset=".8" stop-color="#b0b0b0"/><stop offset="1" stop-color="#ddd"/></linearGradient></defs>`;
const bevel=(x,y,w,h)=>`<rect x="${x+.5}" y="${y+.5}" width="${w-1}" height="${h-1}" fill="#a9a9a9" stroke="#111"/><path d="M${x+1.5} ${y+h-1.5}V${y+1.5}H${x+w-1}" fill="none" stroke="#eee"/>`;
function fader(x,y,h,down){ const ty=down?y+h-17:y+2;
 return bevel(x,y,14,h)+`<path d="M${x+7} ${y+5}V${y+h-5}" stroke="#000" stroke-width="2"/><rect x="${x+2.5}" y="${ty+.5}" width="9" height="14" fill="#d4d4d4" stroke="#666"/><path d="M${x+3} ${ty+4}h9M${x+3} ${ty+7}h9M${x+3} ${ty+10}h9" stroke="#777"/>`; }
function hslider(w){ return `<svg width="${w}" height="14">${bevel(0,0,w,14)}<path d="M6 7H${w-6}" stroke="#000" stroke-width="2"/><rect x="2.500" y="2.500" width="14" height="9" fill="#d4d4d4" stroke="#666"/><path d="M5.500 3v8M8.500 3v8M11.500 3v8M14.500 3v8" stroke="#777"/></svg>`; }
function wheel(label,vals,c){ let t='';
 for(let y=19;y<90;y+=4)t+=`M19 ${y}h3M39 ${y}h3`;
 return `<svg width="51" height="93" ${SF} font-size="9" text-anchor="middle">${GRADS}${txt(30,9,label,'fill="#222"')}${bevel(12,13,38,79)}
 <rect x="18" y="15" width="25" height="75" fill="url(#w)"/><path d="${t}" stroke="#222" stroke-width=".8"/><path d="M18 50h5M38 50h5M18 30h4M18 70h4M39 30h4M39 70h4" stroke="#222"/>
 ${vals.map((v,i)=>txt(30,33+20*i,v)).join('')}<path d="M13 45.500l5 5-5 5zM49 45.500l-5 5 5 5z" fill="#f00"/>
 <path d="M6 44v14" stroke="${c}"/><path d="M6 39l3.500 8h-7zM6 62l3.500-8h-7z" fill="${c}"/></svg>`; }
const VL=[['0.1',14.7,-35.7],['0.2',0,-38],['0.5',-14.7,-35.7],['1',-27,-26.7],['2',-36,-14],['5',-39,0],['10',-37,15],['20',-30,27],['V',-32,36.500,9],['50',28.7,-26.7],['20',37,-14],['10',38.7,0],['5',36,15],['2',27.3,27],['mV',32,36.500,9]];
const HL=[['0.5',-4,-39],['0.2',7,-39],['0.1',17,-34],['1',-13,-36],['2',-23,-30],['5',-31,-22],['10',-36,-12],['20',-37,-2],['50',-37,10],['100',-35,20],['200',-27,29],['ms',-32,36.500,9],['50',27.500,-28],['20',35,-21],['10',37.500,-12],['5',40,-1],['2',40,9],['1',37,21],['0.5',29,29],['µs',33,36.500,9]];
function dial(labels,c,ang,mode){
 let tk=''; const n=mode==='H'?19:15;
 for(let i=0;i<n;i++){const a=(140+i*260/(n-1))*Math.PI/180;tk+=`M${46+31*Math.cos(a)} ${45+31*Math.sin(a)}L${46+35*Math.cos(a)} ${45+35*Math.sin(a)}`;}
 const s=(mode==='H'?-54:-60)*Math.PI/180,cs=Math.cos(s),sn=Math.sin(s);
 const big=ang==='l'?`M25 40v10L17 45z`:ang==='ul'?`M26 25l11 4-7 7z`:`M24 29l11 2-7 8z`;
 return `<svg width="92" height="91" ${SF} font-size="8" text-anchor="middle">${GRADS}
 <path d="M1.500 90V45a44.500 44.500 0 0 1 89 0V90z" fill="#fff" stroke="#222"/><rect x="27.500" y="60" width="37" height="32" fill="#a9a9a9" stroke="#222"/>
 <path d="M${46+30*cs} ${45+30*sn}L${46+45*cs} ${45+45*sn}" stroke="#222" stroke-width="5"/><path d="M${46+30*cs} ${45+30*sn}L${46+46*cs} ${45+46*sn}" stroke="#bbb" stroke-width="3"/>
 <path d="${tk}" stroke="#222"/><g fill="#222">${labels.map(([t,x,y,f])=>txt(Math.round(46+x),Math.round(48+y),t,f?`font-size="${f}"`:'')).join('')}</g>
 <circle cx="46" cy="45" r="30" fill="url(#k)" stroke="#555"/><circle cx="46" cy="45" r="16" fill="#888"/><circle cx="46" cy="45" r="14.500" fill="url(#m)"/>
 <path d="${big}" fill="${c}" stroke="#333" stroke-width=".4"/><path d="M49 53l6-4v7z" fill="${c}"/></svg>`; }
const SCSS=`<style>
:host{display:flex;flex-direction:column;box-sizing:border-box;min-width:0;height:212px;border-left:1px solid #000;background:#a9a9a9;font:9px/11px "Liberation Sans",Arial,sans-serif;color:#222;box-shadow:inset 1px 0 #eee}
h2{box-sizing:border-box;flex:none;height:28px;margin:0;padding-right:4px;border-top:1px solid #eee;border-bottom:1px solid #000;box-shadow:0 1px #eee;font:bold 12px/26px "Liberation Sans",Arial,sans-serif;text-align:center}
.top{display:flex;height:96px}
svg{display:block;flex:none}
.side{flex:1;display:flex;flex-direction:column;align-items:flex-end;gap:2px;padding:1px 2px 0 0}
.b{display:flex;align-items:center;justify-content:flex-end;gap:2px;height:14px;white-space:nowrap}
.b button{width:15px;height:14px;padding:0;border:1px solid;border-color:#ddd #111 #111 #ddd;background:radial-gradient(circle at 35% 30%,#999,#3a3a3a)}
.b button.lit{background:radial-gradient(circle at 40% 40%,#fff,#f0a8a8)}
.dial{display:grid;margin-top:-4px;justify-items:center;align-items:end}
.dial>*{grid-area:1/1}
input{box-sizing:border-box;width:35px;height:13px;margin:0 0 2px;padding:0 2px;border:1px solid #333;border-radius:0;background:#fff;font:9px/11px "Liberation Sans",sans-serif;color:#223}
.src{display:flex;gap:8px;font-weight:bold;align-items:center}
.mid{display:flex;flex-direction:column;align-items:center}
</style>`;
const letters=`<b style="color:${COL.A}">A</b><b style="color:${COL.B}">B</b><b style="color:${COL.C}">C</b><b style="color:${COL.D}">D</b>`;
define('scope-channel', el => { const n=el.getAttribute('name'), c=COL[n], sum=el.getAttribute('sum');
 return SCSS+`<h2 style="color:${c}">Channel ${n}</h2><div class="top">${wheel('Position',el.getAttribute('marks').split(','),c)}<div class="side">
 <svg width="40" height="63" ${SF} font-size="9" text-anchor="end" fill="#222">${['AC','DC','GND','OFF'].map((t,i)=>txt(23,14+14*i,t)).join('')}${fader(25,0,63)}</svg>
 <label class="b">Invert<button aria-label="Invert"></button></label>${sum?`<label class="b">${sum}<button aria-label="${sum}"></button></label>`:''}</div></div>
 <div class="dial">${dial(VL,c,el.getAttribute('dir'))}<input aria-label="Channel ${n} scale" value="${el.getAttribute('value')}"></div>`; });
define('scope-trigger', SCSS+`<style>.top{height:93px}.b{height:15px;padding-right:2px}.mid{margin-top:8px;padding-right:4px}.src{gap:8px;line-height:9px;margin-right:-4px}.src+svg{margin:1px 0 0 2px}</style><h2 style="color:${COL.T}">Trigger</h2><div class="top">${wheel('Level',['-10','0','10'],COL.T)}<div class="side">
 <svg width="40" height="80" ${SF} font-size="9" text-anchor="end" fill="#222">${txt(23,14,'AC')}${txt(23,28,'DC')}${fader(25,0,33,true)}${fader(25,45,33)}<path d="M15 59h4v-10h4M15 64h4v10h4" fill="none" stroke="#333" stroke-width="1.500"/></svg></div></div>
 <label class="b">Auto<button class="lit" aria-label="Auto"></button></label><label class="b">One-Shot<button aria-label="One-Shot"></button></label><label class="b">Cursors<button aria-label="Cursors"></button></label>
 <div class="mid"><span>Source</span><div class="src">${letters}</div>${hslider(63)}</div>`);
define('scope-horizontal', () => { let t='';for(let x=9;x<78;x+=4)t+=`M${x} 8v4M${x} 31v-4`;
 return SCSS+`<style>.mid{height:97px;padding-top:3px;box-sizing:border-box;flex:none}.src{margin-bottom:2px;line-height:9px}.mid>svg{margin-bottom:2px}</style><h2 style="color:${COL.H}">Horizontal</h2>
 <div class="mid"><span>Source</span><div class="src"><svg width="10" height="7"><path d="M0 6.500h1L9 1v5" fill="none" stroke="${COL.H}"/></svg>${letters}</div>${hslider(79)}<span>Position</span>
 <svg width="80" height="39" ${SF} font-size="9" text-anchor="middle">${GRADS}${bevel(0,0,80,39)}<rect x="2" y="7" width="76" height="26" fill="url(#wh)"/><path d="${t}" stroke="#111" stroke-width=".8"/>${txt(18,23,'-390')}${txt(38,23,'-400')}${txt(58,23,'-410')}<path d="M34 2h9l-4.500 5zM34 37h9l-4.500-5z" fill="#f00"/></svg></div>
 <div class="dial">${dial(HL,COL.H,'h','H')}<input aria-label="Timebase" value="5m"></div>`; });
define('scope-screen', () => { let g='',w='';
 for(let i=0;i<=20;i++)g+=`M${i*20+.5} 0v401M0 ${i*20+.5}h401`;
 for(let x=0;x<=400;x++)w+=(x?'L':'M')+(x+.5)+' '+(Math.round(111.8-3*x/400-42.5*Math.cos((x-7.5)/31.1*2*Math.PI))+.5);
 return `<style>:host{display:block;width:401px;height:401px;border:1px solid #aaa;background:#000;outline:1px solid #000}svg{display:block}</style>
 <svg width="401" height="401" fill="none" shape-rendering="crispEdges"><path d="${g}" stroke="#004000"/><path d="M0 160.500h401" stroke="#00c8e0"/><path d="M0 240.500h401" stroke="#e05070"/><path d="M0 320.500h401" stroke="#00c040"/><path d="${w}" stroke="#ffff00"/></svg>`; });
define('scope-window', `<style>
:host{display:block;width:689px;height:450px;border-top:1px solid #555;box-sizing:border-box;background:#fff;box-shadow:0 2px 12px 2px rgba(0,0,0,.4)}
header{display:flex;justify-content:space-between;height:25px;line-height:24px;padding-left:3px}
header button{width:19px;height:19px;margin:2px 1px;padding:0;border:0;background:#c75050;display:grid;place-items:center}
svg{display:block}
.body{display:flex}
.left{flex:none;display:flex;flex-direction:column;box-sizing:border-box;width:407px;height:424px;padding:2px 0 0 2px;background:#d8d8d8;border-bottom:1px solid #000}
.sb{display:flex;flex:1;align-items:center;margin:2px 0 0 -1px;border-top:1px solid #000;background:#f0f0f0;padding:0 5px}
.sb i{width:65px;height:14px;margin-left:138px;background:#cdcdcd}
.sb svg+i+svg{margin-left:auto}
.panels{flex:1;display:grid;grid-template-columns:repeat(3,minmax(0,1fr))}
</style><header><span>Digital Oscilloscope</span><button aria-label="close"><svg width="7" height="7"><path d="M1 1l5 5M6 1L1 6" stroke="#fff" stroke-width="1.500"/></svg></button></header>
<div class="body"><div class="left"><scope-screen></scope-screen><div class="sb"><svg width="8" height="9"><path d="M6 1L2 4.500 6 8" fill="none" stroke="#444" stroke-width="2"/></svg><i></i><svg width="8" height="9"><path d="M2 1l4 3.500L2 8" fill="none" stroke="#444" stroke-width="2"/></svg></div></div>
<div class="panels"><scope-trigger></scope-trigger>
<scope-channel name="A" marks="110,120,130" sum="A+B" dir="ul" value="1"></scope-channel>
<scope-channel name="C" marks="-50,-40,-30" sum="C+D" dir="l" value="5"></scope-channel>
<scope-horizontal></scope-horizontal>
<scope-channel name="B" marks="30,40,50" dir="l" value="5"></scope-channel>
<scope-channel name="D" marks="-130,-120,-110" dir="l" value="5"></scope-channel></div></div>`);

define('status-bar', `<style>
:host{display:flex;flex:none;gap:5px;height:26px;background:#e4ebf1;font-size:11px}
.g{display:flex;align-items:center;border-right:1px solid #a4c8dc;background:linear-gradient(#e6f3f9,#d4e9f4 55%,#b0d4e8);box-sizing:border-box;white-space:nowrap}
.g>i{flex:none;width:3px;height:22px;margin:0 3px;background:repeating-linear-gradient(#fff 0 1px,#aebfca 1px 3px,transparent 3px 4px)}
.run{width:259px}
.run icon-button{width:22px;margin-right:14px}
.run icon-button:first-of-type{margin-left:10px}
.run icon-button:nth-of-type(4){margin-right:6px}
.msg{display:flex;align-items:center;gap:4px;margin-left:7px}
.info{width:412px;color:#103c30}
.info span{margin-left:4px}
.rest{flex:1;border-right:0}
.mark{margin-left:auto;padding:0 15px 6px 0;font:16px/20px Roboto,"Liberation Sans",sans-serif;color:#8a949a;text-shadow:1px 1px #fff}
</style><div class="g run"><i></i>${B('play step pause stop')}<bar-separator></bar-separator><span class="msg">${svgIcon('warn')}6 Message(s)</span></div>
<div class="g info"><i></i><span>ANIMATING: 0.572949150s (CPU load 82%)</span></div>
<div class="g rest"><i></i><span class="mark">CSDN @Yeats_Liao</span></div>`);

define('proteus-app', `<style>
:host{display:flex;flex-direction:column;height:100vh}
main{flex:1;display:flex;min-height:0;background:#e4eaf2;box-sizing:border-box;padding-bottom:1px}
.split{flex:none;width:4px;background:#a8cce0}
</style><desktop-strip></desktop-strip><title-bar></title-bar><menu-bar></menu-bar><main-toolbar></main-toolbar><tab-strip></tab-strip>
<main><mode-bar></mode-bar><device-panel></device-panel><div class="split"></div><schematic-canvas><scope-window></scope-window></schematic-canvas><div class="split"></div></main><status-bar></status-bar>`);
</script>
</body>
</html>
